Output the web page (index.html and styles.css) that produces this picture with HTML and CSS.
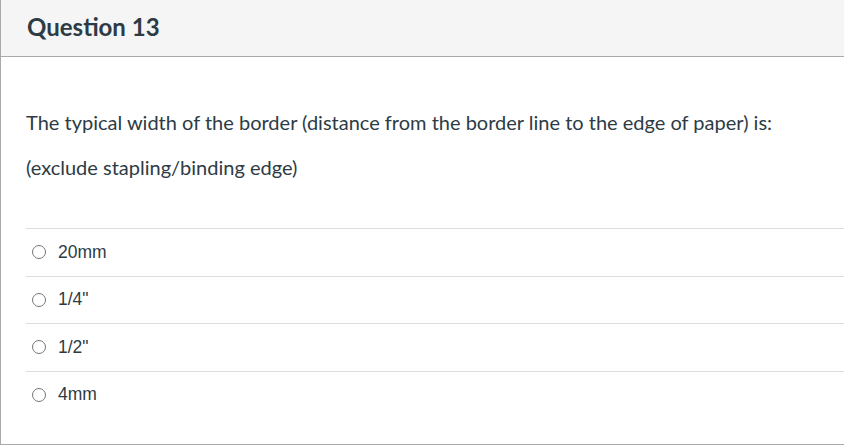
FILE: index.html
```html
<!DOCTYPE html>
<html>
<head>
<meta charset="utf-8">
<link rel="stylesheet" href="styles.css">
</head>
<body>
<div class="question">
  <div class="header">
    <h2 class="title">Question 13</h2>
  </div>
  <div class="body">
    <div class="text">
      <p>The typical width of the border (distance from the border line to the edge of paper) is:</p>
      <p>(exclude stapling/binding edge)</p>
    </div>
    <div class="answers">
      <label class="answer"><span class="radio"></span><span class="label">20mm</span></label>
      <label class="answer"><span class="radio"></span><span class="label">1/4"</span></label>
      <label class="answer"><span class="radio"></span><span class="label">1/2"</span></label>
      <label class="answer"><span class="radio"></span><span class="label">4mm</span></label>
    </div>
  </div>
</div>
</body>
</html>
```
FILE: styles.css
```css
html, body {
  margin: 0;
  padding: 0;
  background: #fff;
  overflow: hidden;
}
body {
  font-family: Lato, "Liberation Sans", sans-serif;
  color: #2d3b45;
}
.question {
  width: 880px;
  height: 445px;
  box-sizing: border-box;
  border-left: 1px solid #aaa;
  border-bottom: 1px solid #aaa;
}
.header {
  height: 57px;
  box-sizing: border-box;
  background: #f5f5f5;
  border-bottom: 1px solid #aaa;
  display: flex;
  align-items: center;
  padding-left: 26px;
}
.title {
  margin: 0;
  font-size: 24px;
  font-weight: 700;
  line-height: 1;
  padding-bottom: 2px;
}
.body {
  padding: 0 0 0 25px;
}
.text {
  padding-top: 53px;
  font-size: 20px;
  line-height: 25px;
}
.text p {
  margin: 0 0 20px;
}
.text p:last-child {
  margin-bottom: 0;
}
.answers {
  margin-top: 48px;
}
.answer {
  display: flex;
  align-items: center;
  height: 47.5px;
  box-sizing: border-box;
  border-top: 1px solid #ddd;
  padding-left: 6px;
  font-family: "Liberation Sans", Arial, sans-serif;
  font-size: 17.5px;
}
.radio {
  width: 14px;
  height: 14px;
  box-sizing: border-box;
  border: 1px solid #767676;
  border-radius: 50%;
  margin-right: 12px;
}
```
